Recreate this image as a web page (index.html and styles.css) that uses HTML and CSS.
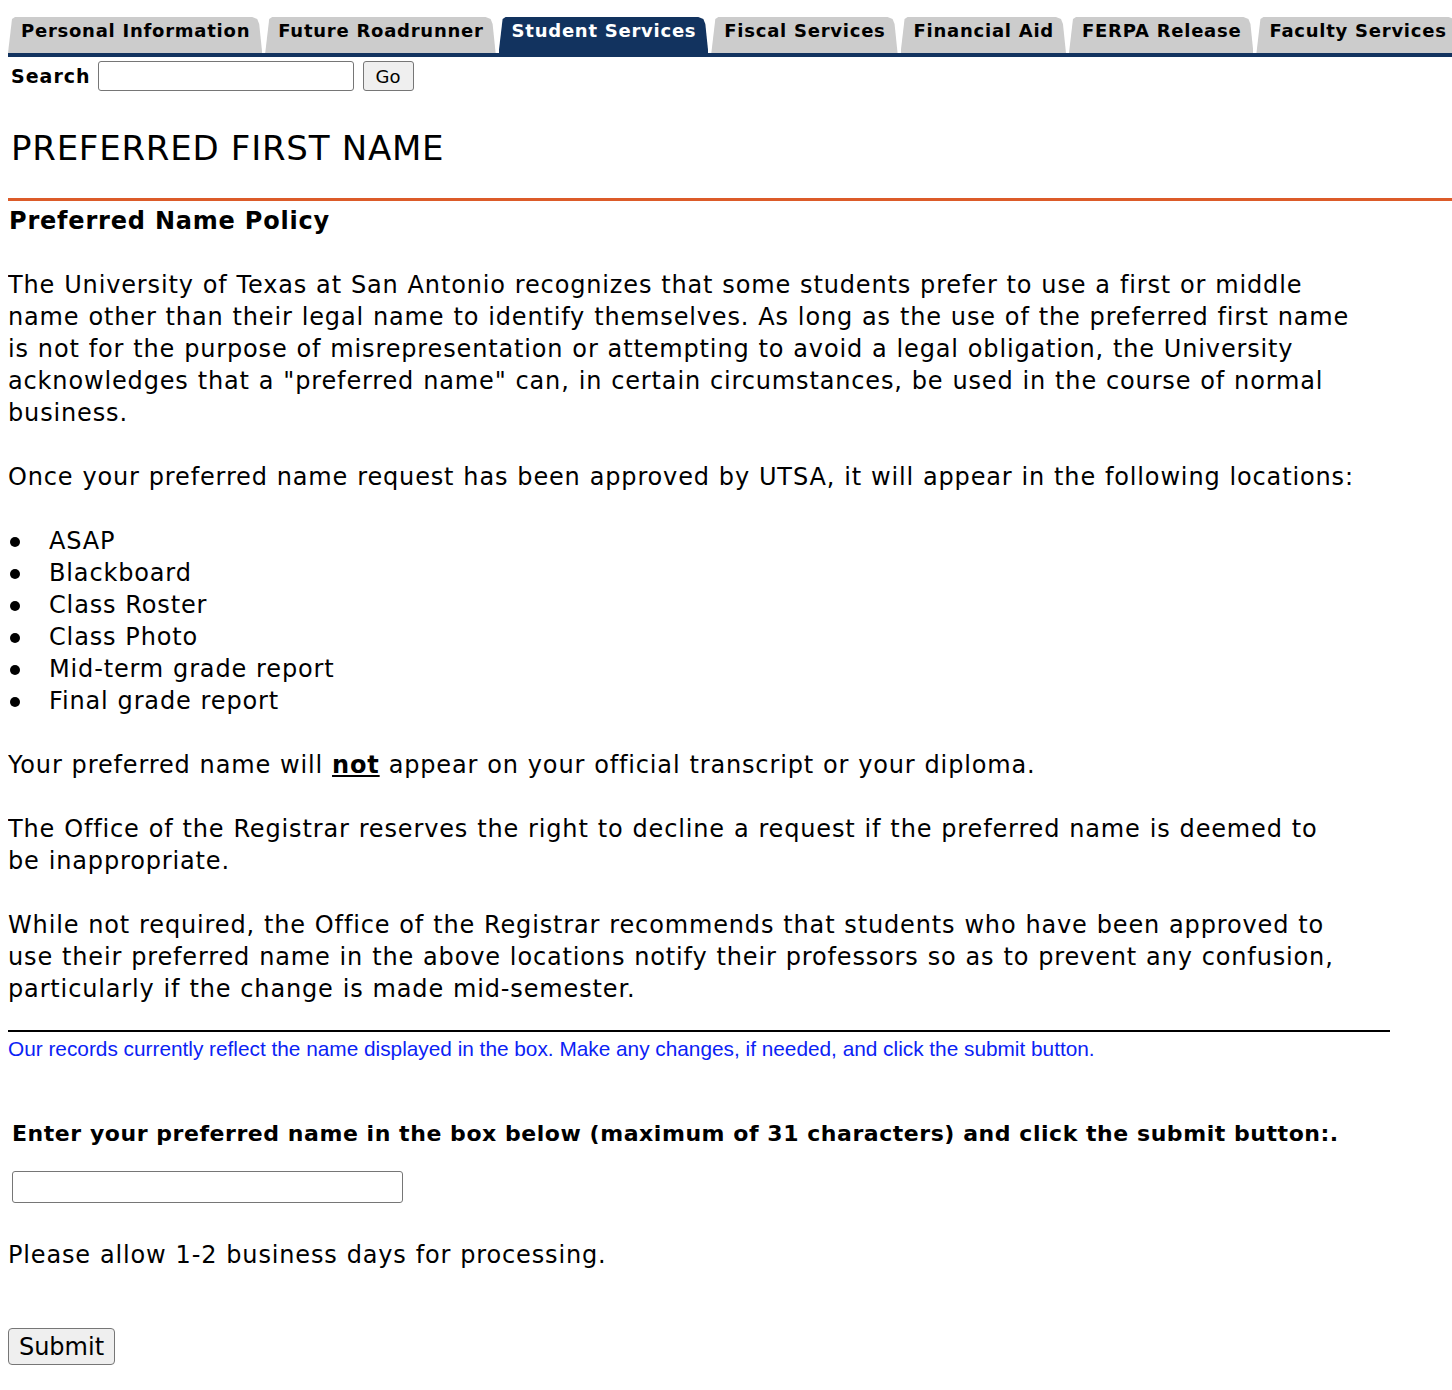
FILE: index.html
```html
<!DOCTYPE html>
<html lang="en">

	<head>
		<meta charset="UTF-8">
		<title>Preferred First Name</title>
		<link rel="stylesheet" href="styles.css">
	</head>

	<body>
		<!--顶部菜单-->
		<div class="tabs">
			<a class="tab" href="#">Personal Information</a>
			<a class="tab" href="#">Future Roadrunner</a>
			<a class="tab tab_active" href="#">Student Services</a>
			<a class="tab" href="#">Fiscal Services</a>
			<a class="tab" href="#">Financial Aid</a>
			<a class="tab" href="#">FERPA Release</a>
			<a class="tab" href="#">Faculty Services</a>
		</div>
		<div class="tab_bar"></div>

		<!--搜索-->
		<form class="search_form" onsubmit="return false;">
			<label class="search_label" for="search">Search</label>
			<input id="search" class="search_input" type="text" name="search" />
			<button class="go_button" type="button">Go</button>
		</form>

		<h1 class="page_title">PREFERRED FIRST NAME</h1>
		<div class="title_rule"></div>

		<!--政策说明-->
		<div class="policy">
			<div class="policy_title">Preferred Name Policy</div>
			<p class="policy_p policy_first">The University of Texas at San Antonio recognizes that some students prefer to use a first or middle name other than their legal name to identify themselves. As long as the use of the preferred first name is not for the purpose of misrepresentation or attempting to avoid a legal obligation, the University acknowledges that a "preferred name" can, in certain circumstances, be used in the course of normal business.</p>
			<p class="policy_p">Once your preferred name request has been approved by UTSA, it will appear in the following locations:</p>
			<ul class="policy_list">
				<li>ASAP</li>
				<li>Blackboard</li>
				<li>Class Roster</li>
				<li>Class Photo</li>
				<li>Mid-term grade report</li>
				<li>Final grade report</li>
			</ul>
			<p class="policy_p">Your preferred name will <b class="not_word">not</b> appear on your official transcript or your diploma.</p>
			<p class="policy_p">The Office of the Registrar reserves the right to decline a request if the preferred name is deemed to be inappropriate.</p>
			<p class="policy_p policy_last">While not required, the Office of the Registrar recommends that students who have been approved to use their preferred name in the above locations notify their professors so as to prevent any confusion, particularly if the change is made mid-semester.</p>
		</div>
		<div class="policy_rule"></div>
		<div class="info_text">Our records currently reflect the name displayed in the box. Make any changes, if needed, and click the submit button.</div>

		<!--填写表单-->
		<form class="name_form" onsubmit="return false;">
			<div class="name_label">Enter your preferred name in the box below (maximum of 31 characters) and click the submit button:.</div>
			<input id="pref_name" class="name_input" type="text" name="pref_name" maxlength="31" />
			<div class="name_note">Please allow 1-2 business days for processing.</div>
			<button class="submit_button" type="button">Submit</button>
		</form>
	</body>

</html>
```

FILE: styles.css
```css
/*页面*/

body {
	margin: 8px 0 8px 8px;
	font-family: Verdana, "DejaVu Sans", sans-serif;
	color: black;
	background-color: white;
}

/*菜单*/

.tabs {
	display: flex;
	gap: 3px;
	margin-top: 9px;
	height: 36px;
}

.tab {
	display: block;
	height: 36px;
	box-sizing: border-box;
	padding: 0 12px 8px 13px;
	line-height: 28px;
	font-size: 18px;
	font-weight: bold;
	letter-spacing: 0.75px;
	color: black;
	text-decoration: none;
	white-space: nowrap;
	background-color: #cccccc;
	clip-path: polygon(4px 2px, 7px 0, calc(100% - 10px) 0, calc(100% - 5px) 2px, calc(100% - 3px) 7px, 100% 100%, 0 100%);
}

.tab_active {
	background-color: #12335f;
	color: white;
}

.tab_bar {
	height: 4px;
	background-color: #12335f;
}

/*搜索*/

.search_form {
	display: flex;
	align-items: center;
	margin: 4px 0 0 3px;
	height: 30px;
}

.search_label {
	font-size: 19px;
	font-weight: bold;
	letter-spacing: 1px;
	margin-right: 7px;
}

.search_input {
	width: 256px;
	height: 30px;
	box-sizing: border-box;
	border: 1px solid #767676;
	border-radius: 3px;
	margin: 0 9px 0 0;
	padding: 0 4px;
}

.go_button {
	width: 51px;
	height: 30px;
	box-sizing: border-box;
	border: 1px solid #767676;
	border-radius: 3px;
	background-color: #efefef;
	font-family: Verdana, "DejaVu Sans", sans-serif;
	font-size: 18px;
	color: black;
	padding: 0;
}

.page_title {
	font-size: 34px;
	font-weight: normal;
	line-height: 40px;
	letter-spacing: 0.75px;
	margin: 37px 0 0 3px;
}

.title_rule {
	height: 3px;
	margin-top: 30px;
	background-color: #dc5b29;
}

/*政策*/

.policy {
	width: 1346px;
	font-size: 24px;
	line-height: 32px;
	letter-spacing: 0.85px;
	word-spacing: 0.5px;
}

.policy_title {
	font-weight: bold;
	letter-spacing: 0.8px;
	word-spacing: 0;
	margin: 4px 0 0 1px;
}

.policy_p {
	margin: 32px 0;
}

.policy_first {
	margin-top: 32px;
}

.policy_last {
	margin-bottom: 0;
}

.not_word {
	text-decoration: underline;
}

.policy_list {
	list-style: none;
	margin: 32px 0;
	padding-left: 0;
}

.policy_list li {
	display: flex;
	align-items: center;
}

.policy_list li::before {
	content: "";
	width: 10px;
	height: 10px;
	border-radius: 50%;
	background-color: black;
	margin: 2px 29px 0 2px;
}

.policy_rule {
	width: 1382px;
	border-bottom: 2px solid black;
	margin-top: 25px;
}

.info_text {
	font-family: "Liberation Sans", Arial, sans-serif;
	font-size: 20.8px;
	line-height: 24px;
	color: #0b22f5;
	margin-top: 5px;
}

/*表单*/

.name_form {
	margin: 0;
}

.name_label {
	font-size: 22px;
	font-weight: bold;
	line-height: 30px;
	letter-spacing: 0.55px;
	margin: 58px 0 0 4px;
}

.name_input {
	display: block;
	width: 391px;
	height: 32px;
	box-sizing: border-box;
	border: 1px solid #767676;
	border-radius: 3px;
	margin: 22px 0 0 4px;
}

.name_note {
	font-size: 24px;
	line-height: 32px;
	letter-spacing: 0.85px;
	word-spacing: 0.5px;
	margin-top: 36px;
}

.submit_button {
	display: block;
	width: 107px;
	height: 37px;
	box-sizing: border-box;
	margin-top: 57px;
	border: 1px solid #767676;
	border-radius: 4px;
	background-color: #efefef;
	font-family: Verdana, "DejaVu Sans", sans-serif;
	font-size: 24px;
	color: black;
	padding: 0;
}
```
